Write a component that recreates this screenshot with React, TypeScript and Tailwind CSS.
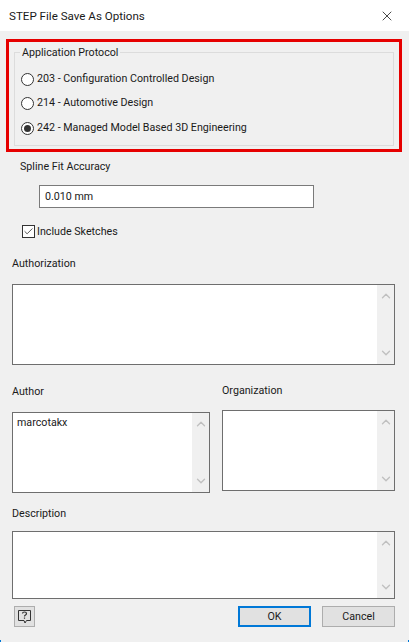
import { ChevronDown, ChevronUp, X, Check } from "lucide-react";

function MemoBox({ text, className }: { text?: string; className: string }) {
  return (
    <div className={`flex border border-[#6e6e6e] bg-white ${className}`}>
      <div className="flex-1 px-[4px] pt-[2px] text-[#1a1a1a]">{text}</div>
      <div className="flex w-[17px] flex-col items-center justify-between bg-[#f0f0f0] py-[4px] text-[#c0c0c0]">
        <ChevronUp size={14} strokeWidth={2.4} />
        <ChevronDown size={14} strokeWidth={2.4} />
      </div>
    </div>
  );
}

function Radio({ label, checked }: { label: string; checked?: boolean }) {
  return (
    <div className="flex h-[24px] items-center gap-[3px]">
      <span className="flex h-[13px] w-[13px] items-center justify-center rounded-full border border-[#333] bg-white">
        {checked && <span className="h-[7px] w-[7px] rounded-full bg-[#333]" />}
      </span>
      <span>{label}</span>
    </div>
  );
}

export default function App() {
  return (
    <div className="relative h-[642px] w-[409px] overflow-hidden bg-[#f0f0f0] font-['Roboto','Noto_Sans',sans-serif] text-[10.7px] leading-[16px] text-[#1a1a1a]">
      <div className="flex h-[31px] items-center justify-between bg-white pl-[9px] pr-[14px] text-[11.6px]">
        <span>STEP File Save As Options</span>
        <X size={16} strokeWidth={1.2} />
      </div>

      <div className="mx-[6px] mt-[8px] h-[113px] w-[396px] border-[3px] border-[#e60000] px-[5px] pt-[2px]">
        <fieldset className="h-[102px] border border-[#dcdcdc] pl-[6px]">
          <legend className="ml-[-1px] px-[2px] pt-[1px]">Application Protocol</legend>
          <div className="mt-[6px]">
            <Radio label="203 - Configuration Controlled Design" />
            <Radio label="214 - Automotive Design" />
            <div className="pt-[1px]">
              <Radio label="242 - Managed Model Based 3D Engineering" checked />
            </div>
          </div>
        </fieldset>
      </div>

      <div className="mt-[7px] pl-[20px]">Spline Fit Accuracy</div>
      <div className="ml-[39px] mt-[10px] flex h-[23px] w-[275px] items-center border border-[#7a7a7a] bg-white px-[5px]">
        0.010 mm
      </div>
      <div className="ml-[22px] mt-[15px] flex h-[16px] items-center gap-[2px]">
        <span className="flex h-[13px] w-[13px] items-center justify-center border border-[#333] bg-white">
          <Check size={11} strokeWidth={1.6} />
        </span>
        <span className="pt-[2px]">Include Sketches</span>
      </div>

      <div className="mt-[17px] pl-[12px]">Authorization</div>
      <MemoBox className="ml-[12px] mt-[12px] h-[81px] w-[383px]" />

      <div className="ml-[12px] mt-[17px] flex w-[383px] justify-between">
        <div>
          <div className="mt-[2px]">Author</div>
          <MemoBox text="marcotakx" className="mt-[12px] h-[81px] w-[198px]" />
        </div>
        <div>
          <div className="mt-[1px]">Organization</div>
          <MemoBox className="mt-[11px] h-[81px] w-[173px]" />
        </div>
      </div>

      <div className="mt-[13px] pl-[12px]">Description</div>
      <MemoBox className="ml-[12px] mt-[9px] h-[68px] w-[383px]" />

      <div className="ml-[14px] mt-[7px] flex w-[381px] items-center">
        <button className="flex h-[21px] w-[21px] items-center justify-center border border-[#adadad] bg-[#e1e1e1]">
          <svg width="15" height="16" viewBox="0 0 15 16" fill="none" stroke="#333" strokeWidth="1">
            <path d="M1.5 1.5h12v10H9.5l-1.5 2.5-1-2.5H1.5z" />
            <path d="M5.5 4.5q0-1.5 2-1.5t2 1.5q0 1-1 1.5t-1 1.5M7.5 8.5v1.2" strokeWidth="1.2" />
          </svg>
        </button>
        <button className="ml-auto h-[21px] w-[73px] border-2 border-[#0078d7] bg-[#e1e1e1]">OK</button>
        <button className="ml-[11px] h-[21px] w-[73px] border border-[#adadad] bg-[#e1e1e1]">Cancel</button>
      </div>

      {/* window frame corners peeking in at the bottom */}
      <span className="absolute bottom-0 left-0 h-[2px] w-[1px] bg-[#0078d7]" />
      <span className="absolute bottom-0 right-0 h-[2px] w-[1px] bg-[#0078d7]" />
    </div>
  );
}
